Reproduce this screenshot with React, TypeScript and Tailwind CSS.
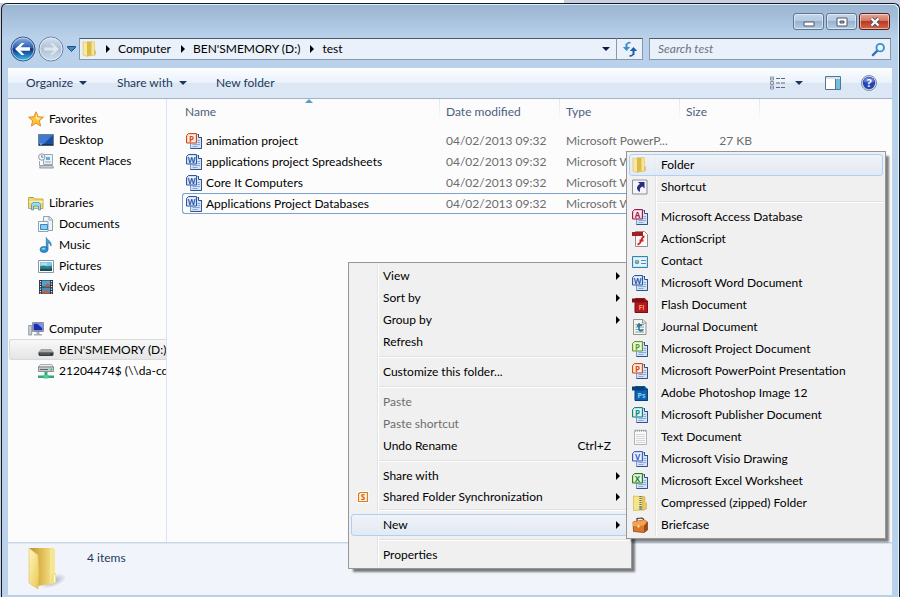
import React from 'react';

type IconProps = { className?: string };

const Svg = ({ children, className = 'h-4 w-4' }: { children: React.ReactNode; className?: string }) => (
  <svg viewBox="0 0 16 16" className={`shrink-0 ${className}`} aria-hidden="true">
    {children}
  </svg>
);

const OfficeIcon = ({ letter, color, tint }: { letter: string; color: string; tint: string }) => (
  <Svg>
    <path d="M4.5 1.5h8l3 3v11h-11z" fill="#d5e3f6" stroke="#7d9bcb" />
    <path d="M12.5 1v3.5H16" fill="#fff" stroke="#2f4f8a" />
    <path d="M15.5 4.5v11h-11" fill="none" stroke="#34538c" />
    <path d="M11.5 7.5h2.500M11.500 9.500h2.500M6.500 11.500h7.500M6.500 13.500h5" stroke="#8aa8d8" fill="none" />
    <path d="M.5 2.500 2.500.5h8v9.500h-10z" fill={tint} stroke={color} />
    <path d="M2 9V3.200L3.200 2H9v7z" fill="#fff" opacity=".65" />
    <text x="5.500" y="8.500" textAnchor="middle" fontSize="8" fontWeight="700" fontFamily="Open Sans, sans-serif" fill={color}>
      {letter}
    </text>
  </Svg>
);

const WordIcon = () => <OfficeIcon letter="W" color="#2a57a8" tint="#cfe0f7" />;
const PowerPointIcon = () => <OfficeIcon letter="P" color="#cf4a1c" tint="#fbd0b4" />;

const AdobeIcon = ({ letter, dark, light, text }: { letter: string; dark: string; light: string; text: string }) => (
  <Svg>
    <path d="M3 1h9.500L16 4v12H3z" fill={light} />
    <path d="M0 1.500h12v4H0z" fill={dark} />
    <path d="M12 1v3.500h4" fill="none" stroke={dark} />
    <path d="M3 5.500v10h12.500V5" fill="none" stroke={dark} />
    <text x="9.500" y="13" textAnchor="middle" fontSize="7" fontWeight="700" fontFamily="Open Sans, sans-serif" fill={text}>
      {letter}
    </text>
  </Svg>
);

const FolderIcon = ({ className }: IconProps) => (
  <Svg className={className}>
    <path d="M5 .8h7.500v13.500L5 15z" fill="#dcbb4c" stroke="#d3b24a" strokeWidth=".5" />
    <path d="M9.500 1h3v13l-3 .5z" fill="#f6e596" />
    <path d="M12 9.500h2v4l-2 .8z" fill="#d8c37a" />
    <path d="M1 .8 6 2.500V15.500l-5-1.500z" fill="#f8e99f" stroke="#d9bd58" strokeWidth=".6" />
    <path d="m5 2.500 1 .4v12.300l-1-.4z" fill="#dcb945" />
  </Svg>
);

const LargeFolderIcon = () => (
  <svg viewBox="0 0 40 46" className="h-[46px] w-10 shrink-0" aria-hidden="true">
    <defs>
      <linearGradient id="folder-back" x1="0" x2="1">
        <stop offset="0" stopColor="#b98f2c" />
        <stop offset=".5" stopColor="#e0bd55" />
        <stop offset="1" stopColor="#f8eb9c" />
      </linearGradient>
      <linearGradient id="folder-front" x1="0" x2="1" y2="1">
        <stop offset="0" stopColor="#fdf6c3" />
        <stop offset="1" stopColor="#ecc750" />
      </linearGradient>
      <radialGradient id="folder-shade">
        <stop offset="0" stopColor="#8f99ad" stopOpacity=".8" />
        <stop offset="1" stopColor="#8f99ad" stopOpacity="0" />
      </radialGradient>
    </defs>
    <ellipse cx="25" cy="34" rx="14" ry="6" fill="url(#folder-shade)" transform="rotate(-20 25 34)" />
    <path d="M1 1h24l2 1v34l-17 3z" fill="url(#folder-back)" />
    <path d="M22 2l5 0v33l-5 1z" fill="#f7e793" />
    <path d="M26 26c2-1 2 1 2 3v7l-5 1v-9z" fill="#f4df80" />
    <path d="M26.500 28v7" stroke="#fff" strokeWidth="1" />
    <path d="M1 1 10 8l1 18-1 16-9-6z" fill="url(#folder-front)" stroke="#dcc05a" strokeWidth=".6" />
  </svg>
);

const StarIcon = () => (
  <Svg>
    <path d="m8 .8 2.100 4.900 5.300.5-4 3.500 1.200 5.300L8 12.200 3.400 15l1.200-5.300-4-3.500 5.300-.5z" fill="#fdc53b" stroke="#e0812a" strokeWidth=".9" />
    <path d="m8 3 1.300 3.500 3.700.5-2.800 2L8 8z" fill="#fff0a0" />
  </Svg>
);

const DesktopIcon = () => (
  <Svg>
    <path d="M.5 2.500h15v11H.5z" fill="#1d4d9d" stroke="#6f8096" />
    <path d="M1 3h14L5 12.500H1z" fill="#3f7ad0" />
    <path d="M1 12h14v1.500H1z" fill="#17335f" />
    <path d="M1.500 11.500h3l-1.500 2z" fill="#7fd0ef" />
  </Svg>
);

const RecentIcon = () => (
  <Svg>
    <path d="M5.500 1.500h9v10h-9z" fill="#eef3f8" stroke="#9aa8b6" />
    <path d="M8 4h4v3H8z" fill="#5fb0dc" />
    <path d="M7 9h6" stroke="#7fa7c4" />
    <path d="M2.500 12.500h12l1 2.500h-14z" fill="#c8cdd3" stroke="#959da6" />
    <path d="M1.500 8v5" stroke="#9aa8b6" />
    <circle cx="3.800" cy="4" r="3.200" fill="#f4f6f8" stroke="#909ba6" />
    <path d="M3.800 2v2.200h1.700" stroke="#55626f" fill="none" strokeWidth=".8" />
  </Svg>
);

const LibrariesIcon = () => (
  <Svg>
    <path d="M.5 2.500h5l1 1.500h8.500v9.500H.5z" fill="#f0d873" stroke="#c9a948" />
    <path d="M1 6h14v1.500H1z" fill="#fbf0b5" />
    <path d="M2 2.500h3" stroke="#5bb54e" />
    <path d="M3.500 15V9.500l1.500-2h6l1.500 2V15h-2v-4h-5v4z" fill="#9bdcf2" stroke="#3f98c4" strokeWidth=".8" />
  </Svg>
);

const DocumentsIcon = () => (
  <Svg>
    <path d="M5.500.5h6l3 3v11h-9z" fill="#eef4fa" stroke="#8ea2b4" />
    <path d="M11 .5v3.500h3.500" fill="none" stroke="#8ea2b4" />
    <path d="M.5 5.500h9.500v10H.5z" fill="#f7fafd" stroke="#8ea2b4" />
    <path d="M2.500 8.500h7v5h-7z" fill="#8accf0" stroke="#3c86b8" />
  </Svg>
);

const MusicIcon = () => (
  <Svg>
    <path d="M8.300.5c.5 3 5.700 3 4.700 8.500-.5-2-1.500-3-3-3.300v6.800H8.300z" fill="#3fa3dc" stroke="#216fa8" strokeWidth=".7" />
    <ellipse cx="6" cy="12.500" rx="4" ry="3" fill="#2a90d0" stroke="#1d6ba3" strokeWidth=".7" />
    <ellipse cx="5.500" cy="11.800" rx="2" ry="1" fill="#8ad0f2" />
  </Svg>
);

const PicturesIcon = () => (
  <Svg>
    <path d="M.5 2.500h15v12H.5z" fill="#fff" stroke="#8a98a4" />
    <path d="M2 4h12v9H2z" fill="#84c9ea" />
    <path d="M2 8.500c3-2 6 1 12-1V13H2z" fill="#2f7f74" />
    <path d="M2 11c4-1 8 1 12-1v3H2z" fill="#1b4c66" />
    <path d="M3 5.500h6v1H3z" fill="#dff2fa" />
  </Svg>
);

const VideosIcon = () => (
  <Svg>
    <path d="M1 1h14v14H1z" fill="#26323d" />
    <path d="M4 1.500h8v6H4z" fill="#4da3d4" />
    <path d="M4 8.500h8v6H4z" fill="#3d8fc4" />
    <path d="m6 7.500 3-3 3 1v2zM4 13l4-2 4 2v1.500H4z" fill="#c2603a" />
    <path d="M2.500 2v13M13.500 2v13" stroke="#e8eef3" strokeWidth="1.300" strokeDasharray="1.200 1.300" />
  </Svg>
);

const ComputerIcon = () => (
  <Svg>
    <path d="M.7 4.500h3v9.500h-3z" fill="#cdd2d6" stroke="#7f888f" strokeWidth=".8" />
    <path d="M4.500 1.500h11v9h-11z" fill="#d9dde1" stroke="#8a9299" />
    <path d="M5.500 2.500h9v7h-9z" fill="#1b2fb4" />
    <path d="M9 2.500h5.500v5z" fill="#7f94ee" />
    <path d="M8.500 11h3v2h2.500v1.500H6V13h2.500z" fill="#a7aeb5" />
  </Svg>
);

const DriveIcon = () => (
  <Svg>
    <path d="m3 7.500h10l2.500 3H.5z" fill="#a9adb0" stroke="#777" strokeWidth=".5" />
    <path d="M.5 10.500h15v2.500l-1 1h-13l-1-1z" fill="#3a3d40" />
    <path d="M2 12h10" stroke="#6d7276" />
  </Svg>
);

const NetworkDriveIcon = () => (
  <Svg>
    <path d="M2.500 1.500h11l2 2.500H.5z" fill="#eceeef" stroke="#8a8f93" strokeWidth=".7" />
    <path d="M.5 4h15v4.500H.5z" fill="#c6cacd" stroke="#777d82" strokeWidth=".8" />
    <path d="M2 6.500h8" stroke="#5e6468" />
    <path d="M12.500 5.500h1.500v2h-1.500z" fill="#35c25a" />
    <path d="M6.500 9h3v3.500H16V15H0v-2.500h6.500z" fill="#30a877" />
    <path d="M5.500 12h5v3.500h-5z" fill="#4fc796" />
  </Svg>
);

const ShortcutIcon = () => (
  <Svg>
    <path d="M.5 1h14.500v14H.5z" fill="#f4f5f8" stroke="#8b8f98" />
    <path d="M6 3h6.500v6.500L10.500 7.500C8 8.500 7.500 10 8 13 4 11 4 7 8 5z" fill="#2a2c7c" />
  </Svg>
);

const ActionScriptIcon = () => (
  <Svg>
    <path d="M3.500.5h9l3 3v12h-12z" fill="#fafafa" stroke="#a08888" />
    <path d="M0 1h11v4H0z" fill="#a51c22" />
    <path d="M12.500 5.500c-4 0-2.500 8-7 8M7.500 9.500h4" stroke="#cf1f26" strokeWidth="1.800" fill="none" />
  </Svg>
);

const ContactIcon = () => (
  <Svg>
    <path d="M.5 3.500h15v11H.5z" fill="#c5e6f5" stroke="#3784ad" />
    <path d="M2 5h12v8H2z" fill="#e5f4fb" />
    <circle cx="5" cy="9" r="2.300" fill="#5aa3b6" />
    <circle cx="5" cy="8.500" r="1" fill="#d2b47b" />
    <path d="M9 7.500h5M9 10.500h5" stroke="#4b8fb2" />
  </Svg>
);

const JournalIcon = () => (
  <Svg>
    <path d="M1.500.5h9.500l3 3v12H1.500z" fill="#f5f5ee" stroke="#8f958f" />
    <path d="M10.500.5V4H14" fill="none" stroke="#8f958f" />
    <path d="M3.500 5.500H12M3.500 8h8.500M3.500 10.500H12M3.500 13H12" stroke="#6a9aa8" strokeWidth=".9" />
    <path d="M7 4v6c0 2 2 2.500 4 1M5 7l5-1" stroke="#2c6f97" strokeWidth="1.500" fill="none" />
  </Svg>
);

const TextIcon = () => (
  <Svg>
    <path d="M2.500 1.500h12v14h-12z" fill="#fafafa" stroke="#b0b4b8" />
    <path d="M4 5.500h9M4 7.500h9M4 9.500h9M4 11.500h9M4 13.500h9" stroke="#c9ced3" strokeWidth=".8" />
    <path d="M3.500.5v2.500M5.500.5v2.500M7.500.5v2.500M9.500.5v2.500M11.500.5v2.500M13.500.5v2.500" stroke="#9da3a8" strokeWidth=".8" />
  </Svg>
);

const ZipIcon = () => (
  <Svg>
    <path d="M1.500 1 12.500 2v13l-11 .5z" fill="#f6e689" stroke="#d2b549" strokeWidth=".7" />
    <path d="M10.500 1.500 13 2v5l1.500 1v6l-4 1z" fill="#e9cb5c" stroke="#c5a23d" strokeWidth=".5" />
    <path d="M8.500 1v11" stroke="#6b6f73" strokeWidth="2.400" strokeDasharray="1 1" />
    <path d="M7.300 11.500h2.600v3.500H7.300z" fill="#8b9095" />
  </Svg>
);

const BriefcaseIcon = () => (
  <Svg>
    <path d="M5 4V1.500L10 1l1.500 1v2" fill="none" stroke="#5c3417" strokeWidth="1.200" />
    <path d="m1 5 11-2 3.500 2v8L12 15.500 1.500 14.500z" fill="#d9792c" stroke="#8d4416" strokeWidth=".8" />
    <path d="m12 5.500 3.500-.5v8L12 15.500z" fill="#9c4b18" />
    <path d="m1 5 11-2 3 2-3 3.500-11 .8z" fill="#f1a352" />
    <path d="M5.500 8h2v2.500h-2z" fill="#fbe08c" />
  </Svg>
);

const SyncIcon = () => (
  <Svg>
    <path d="M3 2h12v12H3z" fill="#fff" />
    <path d="M4.500 5 6 3.500h7.500v9h-9z" fill="#fff2dd" stroke="#dd7d1d" strokeWidth="1.200" />
    <text x="9" y="11" textAnchor="middle" fontSize="8" fontWeight="700" fontFamily="Open Sans, sans-serif" fill="#cf5a12">
      S
    </text>
  </Svg>
);

const Triangle = ({ dir, className = 'text-black' }: { dir: 'right' | 'down'; className?: string }) =>
  dir === 'right' ? (
    <svg viewBox="0 0 4 8" className={`h-2 w-1 shrink-0 ${className}`} aria-hidden="true">
      <path d="M0 0l4 4-4 4z" fill="currentColor" />
    </svg>
  ) : (
    <svg viewBox="0 0 8 4" className={`h-1 w-2 shrink-0 ${className}`} aria-hidden="true">
      <path d="M0 0h8L4 4z" fill="currentColor" />
    </svg>
  );

type MenuEntry =
  | { sep: true }
  | { sep?: false; label: string; icon?: React.ReactNode; arrow?: boolean; keys?: string; disabled?: boolean; active?: boolean; tight?: boolean };

const contextMenu: MenuEntry[] = [
  { label: 'View', arrow: true },
  { label: 'Sort by', arrow: true },
  { label: 'Group by', arrow: true },
  { label: 'Refresh' },
  { sep: true },
  { label: 'Customize this folder...' },
  { sep: true },
  { label: 'Paste', disabled: true },
  { label: 'Paste shortcut', disabled: true },
  { label: 'Undo Rename', keys: 'Ctrl+Z' },
  { sep: true },
  { label: 'Share with', arrow: true },
  { label: 'Shared Folder Synchronization', arrow: true, icon: <SyncIcon />, tight: true },
  { sep: true },
  { label: 'New', arrow: true, active: true },
  { sep: true },
  { label: 'Properties' },
];

const newMenu: MenuEntry[] = [
  { label: 'Folder', icon: <FolderIcon />, active: true },
  { label: 'Shortcut', icon: <ShortcutIcon /> },
  { sep: true },
  { label: 'Microsoft Access Database', icon: <OfficeIcon letter="A" color="#9b1d4b" tint="#eebfd0" /> },
  { label: 'ActionScript', icon: <ActionScriptIcon /> },
  { label: 'Contact', icon: <ContactIcon /> },
  { label: 'Microsoft Word Document', icon: <WordIcon /> },
  { label: 'Flash Document', icon: <AdobeIcon letter="Fl" dark="#7c0f14" light="#b3181f" text="#ff9a6a" /> },
  { label: 'Journal Document', icon: <JournalIcon /> },
  { label: 'Microsoft Project Document', icon: <OfficeIcon letter="P" color="#5b9a2b" tint="#d3ecb4" /> },
  { label: 'Microsoft PowerPoint Presentation', icon: <PowerPointIcon /> },
  { label: 'Adobe Photoshop Image 12', icon: <AdobeIcon letter="Ps" dark="#0a3f7d" light="#0e63ab" text="#7fd2ff" /> },
  { label: 'Microsoft Publisher Document', icon: <OfficeIcon letter="P" color="#14857c" tint="#b4e4df" /> },
  { label: 'Text Document', icon: <TextIcon /> },
  { label: 'Microsoft Visio Drawing', icon: <OfficeIcon letter="V" color="#3c5cc0" tint="#cbd6f7" /> },
  { label: 'Microsoft Excel Worksheet', icon: <OfficeIcon letter="X" color="#257a26" tint="#bfe5b5" /> },
  { label: 'Compressed (zipped) Folder', icon: <ZipIcon /> },
  { label: 'Briefcase', icon: <BriefcaseIcon /> },
];

const Menu = ({ label, entries, className }: { label: string; entries: MenuEntry[]; className: string }) => (
  <div
    role="menu"
    aria-label={label}
    className={`absolute border border-[#979797] bg-[#f0f0f0] p-0.5 shadow-[4px_4px_2px_-1px_rgba(0,0,0,0.5)] ${className}`}
  >
    <div className="bg-[linear-gradient(90deg,#f1f1f1_26px,#e2e3e3_26px,#e2e3e3_27px,#ffffff_27px,#ffffff_28px,#f0f0f0_28px)]">
      {entries.map((entry, i) =>
        entry.sep ? (
          <div key={i} role="separator" className="flex h-2 items-center pl-7">
            <div className="h-0.5 w-full border-t border-[#e0e0e0] bg-white" />
          </div>
        ) : (
          <button
            key={i}
            role="menuitem"
            disabled={entry.disabled}
            className={`flex w-full items-center border pl-0.5 pr-2 text-left ${entry.tight ? 'h-[19px]' : 'h-[22px]'} ${
              entry.active ? 'rounded-[3px] border-[#aecff7] bg-linear-to-b from-[#f0f4f9]/80 to-[#dfe8f4]/80' : 'border-transparent'
            } ${entry.disabled ? 'text-[#6d6d6d]' : 'text-black'}`}
          >
            <span className="mr-[13px] h-4 w-4 shrink-0">{entry.icon}</span>
            <span className="flex-1 whitespace-nowrap">{entry.label}</span>
            {entry.keys && <span className="pr-[9px]">{entry.keys}</span>}
            {entry.arrow && <Triangle dir="right" />}
          </button>
        )
      )}
    </div>
  </div>
);

const places = [
  {
    title: 'Favorites',
    icon: <StarIcon />,
    items: [
      { label: 'Desktop', icon: <DesktopIcon /> },
      { label: 'Recent Places', icon: <RecentIcon /> },
    ],
  },
  {
    title: 'Libraries',
    icon: <LibrariesIcon />,
    items: [
      { label: 'Documents', icon: <DocumentsIcon /> },
      { label: 'Music', icon: <MusicIcon /> },
      { label: 'Pictures', icon: <PicturesIcon /> },
      { label: 'Videos', icon: <VideosIcon /> },
    ],
  },
  {
    title: 'Computer',
    icon: <ComputerIcon />,
    items: [
      { label: "BEN'SMEMORY (D:)", icon: <DriveIcon />, selected: true },
      { label: '21204474$ (\\\\da-cdc', icon: <NetworkDriveIcon /> },
    ],
  },
];

const Sidebar = () => (
  <nav aria-label="Places" className="flex w-[159px] shrink-0 flex-col gap-[21px] overflow-hidden border-r border-[#d6e5f5] pl-px pt-[9px]">
    {places.map((group) => (
      <section key={group.title}>
        <a href="#" className="flex h-[21px] items-center gap-[5px] pl-[19px]">
          {group.icon}
          {group.title}
        </a>
        <ul>
          {group.items.map((item) => (
            <li key={item.label}>
              <a
                href="#"
                className={`flex h-[21px] items-center gap-[5px] overflow-hidden whitespace-nowrap border border-r-0 pl-7 ${
                  'selected' in item ? 'rounded-l-[3px] border-[#d9d9d9] bg-linear-to-b from-[#f8f8f8] to-[#e5e5e5]' : 'border-transparent'
                }`}
              >
                {item.icon}
                {item.label}
              </a>
            </li>
          ))}
        </ul>
      </section>
    ))}
  </nav>
);

const files = [
  { name: 'animation project', date: '04/02/2013 09:32', type: 'Microsoft PowerP...', size: '27 KB', icon: <PowerPointIcon /> },
  { name: 'applications project Spreadsheets', date: '04/02/2013 09:32', type: 'Microsoft W...', size: '', icon: <WordIcon /> },
  { name: 'Core It Computers', date: '04/02/2013 09:32', type: 'Microsoft W...', size: '', icon: <WordIcon /> },
  { name: 'Applications Project Databases', date: '04/02/2013 09:32', type: 'Microsoft W...', size: '', icon: <WordIcon />, focused: true },
];

const columns = ['Name', 'Date modified', 'Type', 'Size'];

const FileList = () => (
  <main className="relative min-w-0 flex-1 overflow-hidden pl-[15px]">
    <svg viewBox="0 0 8 4" className="absolute left-[138px] top-0 h-1 w-2" aria-hidden="true">
      <path d="M0 4 4 0l4 4z" fill="#5d9cc4" />
    </svg>
    <table className="w-[578px] table-fixed border-separate border-spacing-0">
      <colgroup>
        <col className="w-[258px]" />
        <col className="w-[120px]" />
        <col className="w-[120px]" />
        <col className="w-20" />
      </colgroup>
      <thead>
        <tr>
          {columns.map((name, i) => (
            <th
              key={name}
              className={`h-[31px] bg-[linear-gradient(180deg,#dbe8f5,#fcfcfc)] bg-[length:1px_22px] bg-right-top bg-no-repeat pb-1.5 text-left font-normal text-[#4c607a] ${
                i === 0 ? 'pl-[3px]' : 'pl-1.5'
              }`}
            >
              {name}
            </th>
          ))}
        </tr>
      </thead>
      <tbody className="[&_td]:h-[21px] [&_td]:overflow-hidden [&_td]:whitespace-nowrap [&_td]:border-y [&_td]:p-0">
        {files.map((file) => (
          <tr key={file.name} className={file.focused ? '[&_td]:border-[#7da2ce]' : '[&_td]:border-transparent'}>
            <td className={file.focused ? 'rounded-l-[3px] border-l' : 'border-l'}>
              <span className="flex items-center gap-1 pl-[3px]">
                {file.icon}
                {file.name}
              </span>
            </td>
            <td className="text-[#6d6d6d]">
              <span className="pl-1.5">{file.date}</span>
            </td>
            <td className="text-[#6d6d6d]">
              <span className="pl-1.5">{file.type}</span>
            </td>
            <td className="text-right text-[#6d6d6d]">
              <span className="pr-2">{file.size}</span>
            </td>
          </tr>
        ))}
      </tbody>
    </table>
  </main>
);

const caption = 'flex h-[17px] items-center justify-center rounded-[3px] border shadow-[inset_0_0_0_1px_rgba(255,255,255,0.5)]';
const glass = 'border-[#5c7590] bg-[linear-gradient(180deg,#c3d5e8_0%,#b4cae2_50%,#98b3d0_50%,#b5cde6_100%)]';

const TitleBar = () => (
  <header className="flex h-[34px] shrink-0 items-start justify-end gap-0.5 pr-0.5 pt-[9px]">
    <button aria-label="Minimize" className={`${caption} ${glass} w-[31px]`}>
      <svg viewBox="0 0 12 6" className="mt-1 h-1.5 w-3">
        <path d="M1 1h10v4H1z" fill="#fff" stroke="#535666" />
      </svg>
    </button>
    <button aria-label="Maximize" className={`${caption} ${glass} w-[31px]`}>
      <svg viewBox="0 0 12 10" className="h-2.5 w-3">
        <path d="M1 1h10v8H1z" fill="#fff" stroke="#535666" />
        <path d="M4 4h4v2H4z" fill="#8aa5c4" stroke="#535666" />
      </svg>
    </button>
    <button
      aria-label="Close"
      className={`${caption} w-[31px] border-[#5b1d1d] bg-[linear-gradient(180deg,#e3a79a_0%,#d5705b_50%,#b93a22_50%,#d1674a_100%)]`}
    >
      <svg viewBox="0 0 12 10" className="h-2.5 w-3">
        <path d="m2.500 1.500 7 7m0-7-7 7" stroke="#535666" strokeWidth="4" />
        <path d="m2.500 1.500 7 7m0-7-7 7" stroke="#fff" strokeWidth="2.200" />
      </svg>
    </button>
  </header>
);

const NavButtons = () => (
  <div className="flex items-center">
    <button aria-label="Back">
      <svg viewBox="0 0 26 26" className="h-[26px] w-[26px]">
        <defs>
          <linearGradient id="back" x2="0" y2="1">
            <stop offset="0" stopColor="#8fb3e4" />
            <stop offset=".45" stopColor="#2b5cb4" />
            <stop offset=".5" stopColor="#0c2f83" />
            <stop offset="1" stopColor="#3fc4f7" />
          </linearGradient>
        </defs>
        <circle cx="13" cy="13" r="12" fill="url(#back)" stroke="#3c5478" />
        <circle cx="13" cy="13" r="11" fill="none" stroke="#cfe2f6" strokeOpacity=".7" />
        <path d="M5 13l6.500-6h3l-4 4.300H20v3.400h-9.500l4 4.300h-3z" fill="#fff" />
      </svg>
    </button>
    <button aria-label="Forward" className="ml-0.5">
      <svg viewBox="0 0 26 26" className="h-[26px] w-[26px]">
        <defs>
          <linearGradient id="forward" x2="0" y2="1">
            <stop offset="0" stopColor="#d5e1ee" />
            <stop offset=".5" stopColor="#adc1d6" />
            <stop offset="1" stopColor="#cfdfee" />
          </linearGradient>
        </defs>
        <circle cx="13" cy="13" r="12" fill="url(#forward)" stroke="#66809d" />
        <circle cx="13" cy="13" r="11" fill="none" stroke="#e8f0f8" strokeOpacity=".8" />
        <path d="M21 13l-6.500-6h-3l4 4.300H6v3.400h9.500l-4 4.300h3z" fill="#dfe6ee" stroke="#c0ccd8" strokeWidth=".5" />
      </svg>
    </button>
    <button aria-label="Recent pages" className="mx-[3px]">
      <svg viewBox="0 0 9 6" className="h-1.5 w-[9px]">
        <path d="M.5.500h8v1l-4 4-4-4z" fill="#3f8ac4" stroke="#1f4f86" />
      </svg>
    </button>
  </div>
);

const crumbs = ['Computer', "BEN'SMEMORY (D:)", 'test'];
const field = 'h-[22px] border border-[#8798ad] border-t-[#4d5966] bg-[#eaf1fa]';

const NavBar = () => (
  <div className="flex h-[30px] shrink-0 items-start pl-0.5 pr-px">
    <div className="-mt-0.5">
      <NavButtons />
    </div>
    <div className={`${field} flex min-w-0 flex-1 items-center pl-0.5`}>
      <FolderIcon />
      <nav aria-label="Address" className="flex flex-1 items-center">
        {crumbs.map((crumb) => (
          <React.Fragment key={crumb}>
            <span className="pl-2">
              <Triangle dir="right" />
            </span>
            <a href="#" className="whitespace-nowrap pl-2 pr-0.5">
              {crumb}
            </a>
          </React.Fragment>
        ))}
      </nav>
      <button aria-label="Previous locations" className="px-1.5 py-2">
        <Triangle dir="down" className="text-[#0a1a4a]" />
      </button>
    </div>
    <button aria-label="Refresh" className={`${field} flex w-[26px] items-center justify-center border-l-0`}>
      <Svg>
        <path d="M4.500 2.500V8" stroke="#3b8fd0" strokeWidth="2" fill="none" />
        <path d="M5 3c1-1.500 2.500-1.500 3.500-1.200" stroke="#3b8fd0" strokeWidth="1.500" fill="none" />
        <path d="M.8 6h7.400l-3.700 4z" fill="#3b8fd0" />
        <path d="M11.500 14V9" stroke="#1e5fa8" strokeWidth="2" fill="none" />
        <path d="M11 13.500c-1 1.500-2.500 1.500-3.500 1.200" stroke="#1e5fa8" strokeWidth="1.500" fill="none" />
        <path d="M7.800 10h7.400l-3.700-4z" fill="#1e5fa8" />
      </Svg>
    </button>
    <label className={`${field} ml-1.5 flex w-[242px] items-center pl-2 pr-1`}>
      <input type="search" aria-label="Search test" placeholder="Search test" className="min-w-0 flex-1 bg-transparent italic outline-none placeholder:text-[#6d7480]" />
      <Svg className="h-[15px] w-[15px]">
        <path d="M6.500 9.500 2 14" stroke="#3a6fb0" strokeWidth="2.500" strokeLinecap="round" />
        <circle cx="9.800" cy="6" r="4" fill="#e9f5fd" stroke="#3f8dcc" strokeWidth="2" />
      </Svg>
    </label>
  </div>
);

const Toolbar = () => (
  <div
    role="toolbar"
    aria-label="Folder actions"
    className="flex h-[31px] shrink-0 items-center border-b border-[#a3b2c9] bg-[linear-gradient(180deg,#fdfeff_0%,#e8f1fb_50%,#dce6f4_50%,#dde8f6_100%)] pl-[18px] pr-[15px] text-[#1e395b]"
  >
    <button className="flex w-[91px] items-center gap-1.5">
      Organize
      <Triangle dir="down" className="text-[#1e395b]" />
    </button>
    <button className="flex w-[99px] items-center gap-1.5">
      Share with
      <Triangle dir="down" className="text-[#1e395b]" />
    </button>
    <button>New folder</button>
    <div className="ml-auto flex items-center">
      <button aria-label="View">
        <Svg>
          <path d="M.5 2h3v3h-3zM.5 6.500h3v3h-3zM.5 11h3v3h-3z" fill="#fff" stroke="#6d7a8c" strokeWidth=".8" />
          <path d="M1.500 3h1v1h-1zM1.500 12h1v1h-1z" fill="#3a7abf" />
          <path d="M1.500 7.500h1v1h-1z" fill="#c04040" />
          <path d="M6 3.500h4M11 3.500h4M6 8h4M11 8h4M6 12.500h4M11 12.500h4" stroke="#5a6a80" />
        </Svg>
      </button>
      <button aria-label="More view options" className="ml-[9px]">
        <Triangle dir="down" className="text-[#1e395b]" />
      </button>
      <button aria-label="Preview pane" className="ml-[22px]">
        <Svg>
          <path d="M.5 1.500h15v13H.5z" fill="#fff" stroke="#5c7390" />
          <path d="M1 2h14v2H1z" fill="#d8e3ee" />
          <path d="M10.500 4v10.500" stroke="#5c7390" />
          <path d="M11 4h4v10h-4z" fill="#6fc0dd" />
        </Svg>
      </button>
      <button aria-label="Help" className="ml-5">
        <Svg>
          <circle cx="8" cy="8" r="7.500" fill="#dfe4ec" stroke="#7f8ba0" />
          <circle cx="8" cy="8" r="6.200" fill="#2447b4" />
          <path d="M2.500 6.500a5.700 5.700 0 0 1 11 0c-3 1.500-8 1.500-11 0z" fill="#5a7bd8" />
          <text x="8" y="12" textAnchor="middle" fontSize="11" fontWeight="700" fontFamily="Open Sans, sans-serif" fill="#fff">
            ?
          </text>
        </Svg>
      </button>
    </div>
  </div>
);

export default function App() {
  return (
    <div className="relative flex min-h-screen flex-col overflow-hidden bg-[#c9d0e2] font-['Lato','Open_Sans',sans-serif] text-[12px] leading-4 text-black">
      <div className="h-[3px] w-[564px] bg-white" />
      <div className="ml-px flex flex-1 flex-col rounded-t-md border-x border-t border-[#16181d] bg-[#b9d1ea] bg-[linear-gradient(180deg,#99b4d1_0px,#b9d1ea_34px)] bg-no-repeat pb-0.5 pl-1.5 pr-[7px] shadow-[inset_-1px_1px_0_#d9f2fb]">
        <TitleBar />
        <NavBar />
        <Toolbar />
        <div className="flex flex-1 bg-[#fcfcfc]">
          <Sidebar />
          <FileList />
        </div>
        <footer className="flex h-[53px] shrink-0 items-start border-t border-[#c9d6e8] bg-[#f1f5fb] pl-5 pt-1 text-[#1e395b] shadow-[inset_0_1px_0_#dde7f3]">
          <LargeFolderIcon />
          <span className="pl-[19px] pt-[3px]">4 items</span>
        </footer>
      </div>
      <Menu label="Folder menu" entries={contextMenu} className="left-[348px] top-[262px] w-[284px]" />
      <Menu label="New" entries={newMenu} className="left-[626px] top-[151px] w-[260px]" />
    </div>
  );
}
